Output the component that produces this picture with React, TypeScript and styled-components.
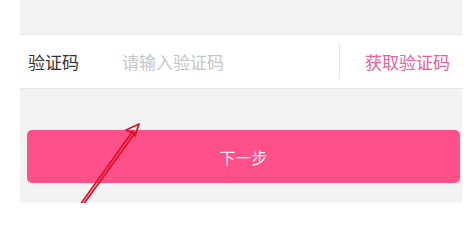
import React from 'react';
import styled, { createGlobalStyle } from 'styled-components';

const GlobalStyle = createGlobalStyle`
    html, body {
        margin: 0;
        padding: 0;
        background: #ffffff;
        font-family: 'Noto Sans CJK SC', 'Noto Sans', sans-serif;
    }
`;

const PageBlock = styled.div`
    position: relative;
    width: 475px;
    height: 203px;
    overflow: hidden;
    background: #ffffff;
`;

const Panel = styled.div`
    margin-left: 20px;
    width: 442px;
    height: 203px;
    padding-top: 34px;
    box-sizing: border-box;
    background: #f3f3f3;
`;

const FieldRow = styled.div`
    display: flex;
    align-items: center;
    height: 55px;
    padding-left: 8px;
    box-sizing: border-box;
    background: #ffffff;
    border-top: 1px solid #e7e7e7;
    border-bottom: 1px solid #e7e7e7;
    font-size: 17px;
`;

const Label = styled.span`
    width: 94px;
    color: #333333;
`;

const Placeholder = styled.span`
    flex: 1;
    color: #c6c6c6;
`;

const Divider = styled.span`
    width: 1px;
    height: 35px;
    background: #e6e6e6;
`;

const CodeLink = styled.span`
    margin-left: 25px;
    margin-right: 12px;
    color: #e8609a;
`;

const NextButton = styled.div`
    display: flex;
    align-items: center;
    justify-content: center;
    margin-top: 41px;
    margin-left: 7px;
    width: 433px;
    height: 53px;
    border-radius: 5px;
    background: #ff5189;
    color: rgba(255, 255, 255, 0.9);
    font-size: 16px;
`;

const Annotation = styled.svg`
    position: absolute;
    left: 0;
    top: 0;
    pointer-events: none;
`;

function App() {
    return (
        <PageBlock>
            <GlobalStyle />
            <Panel>
                <FieldRow>
                    <Label>验证码</Label>
                    <Placeholder>请输入验证码</Placeholder>
                    <Divider />
                    <CodeLink>获取验证码</CodeLink>
                </FieldRow>
                <NextButton>下一步</NextButton>
            </Panel>
            {/* red hand-drawn arrow */}
            <Annotation width="475" height="203" viewBox="0 0 475 203">
                <path
                    d="M80 205 L133 131 M83 205 L135 133 M139 124 L126 130 L130 132 L133 131 M139 124 L135 136 L133 133 L135 133"
                    fill="none"
                    stroke="#e0102a"
                    strokeWidth="1.8"
                    strokeLinejoin="round"
                    strokeLinecap="round"
                />
            </Annotation>
        </PageBlock>
    );
}

export default App;
